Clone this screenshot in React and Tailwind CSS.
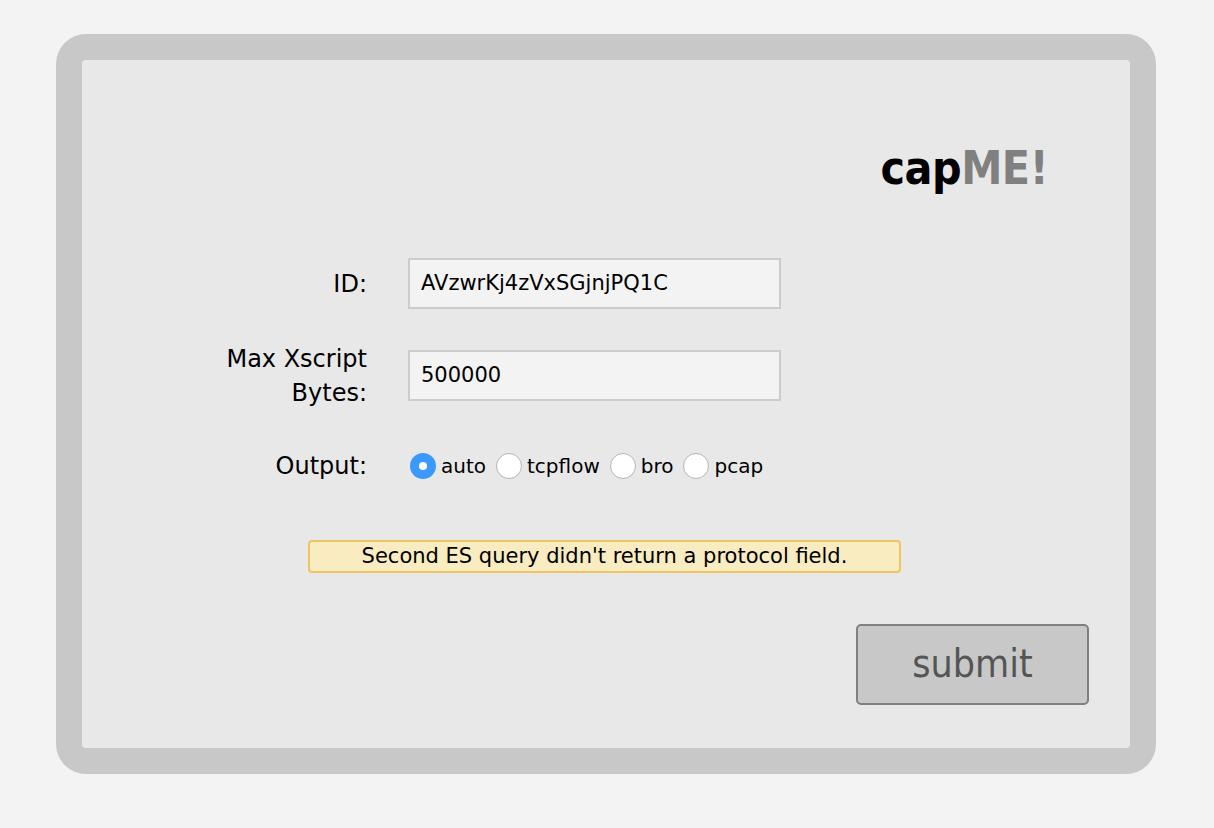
import React from "react";

const dejavu = { fontFamily: '"DejaVu Sans", Verdana, sans-serif' };
const cond = { fontFamily: '"DejaVu Sans Condensed", "DejaVu Sans", sans-serif' };

function Radio({ checked, label }) {
  return (
    <label className="flex items-center">
      {checked ? (
        <span className="flex h-[26px] w-[26px] items-center justify-center rounded-full bg-[#3b99fc]">
          <span className="h-[8px] w-[8px] rounded-full bg-white" />
        </span>
      ) : (
        <span className="h-[26px] w-[26px] rounded-full border border-[#b5b5b5] bg-white" />
      )}
      <span className="ml-[5px] mr-[10px] text-[20px] text-black" style={dejavu}>
        {label}
      </span>
    </label>
  );
}

function Row({ label, children, className = "" }) {
  return (
    <div className={"flex h-[51px] items-center " + className}>
      <div className="w-[285px] text-right text-[24px] leading-[34px] text-black" style={dejavu}>
        {label}
      </div>
      <div className="ml-[41px] flex items-center">{children}</div>
    </div>
  );
}

function Field({ value }) {
  return (
    <div
      className="flex h-[51px] w-[373px] items-center border-2 border-[#cccccc] bg-[#f3f3f3] px-[11px] text-[21px] text-black"
      style={dejavu}
    >
      {value}
    </div>
  );
}

export default function App() {
  return (
    <div className="min-h-[828px] w-full bg-[#f3f3f3] pt-[34px] pl-[56px]">
      <div className="w-[1100px] h-[740px] rounded-[30px] bg-[#c8c8c8] p-[26px]">
        <div className="h-full w-full rounded-[4px] bg-[#e8e8e8] pt-[85px]">
          <div className="flex h-[46px] justify-end pr-[82px]">
            <div className="text-[46px] font-bold leading-none tracking-[-0.5px]" style={cond}>
              <span className="text-black">cap</span>
              <span className="text-[#808080]">ME!</span>
            </div>
          </div>

          <Row label="ID:" className="mt-[67px]">
            <Field value="AVzwrKj4zVxSGjnjPQ1C" />
          </Row>

          <Row
            label={
              <>
                Max Xscript
                <br />
                Bytes:
              </>
            }
            className="mt-[41px]"
          >
            <Field value="500000" />
          </Row>

          <Row label="Output:" className="mt-[39px]">
            <div className="ml-[2px] flex items-center">
              <Radio checked label="auto" />
              <Radio label="tcpflow" />
              <Radio label="bro" />
              <Radio label="pcap" />
            </div>
          </Row>

          <div className="mt-[49px] pl-[226px]">
            <div
              className="flex h-[33px] w-[593px] items-center justify-center rounded-[4px] border-2 border-[#f0c463] bg-[#f9ecc0] text-[21px] text-black"
              style={dejavu}
            >
              Second ES query didn't return a protocol field.
            </div>
          </div>

          <div className="mt-[51px] flex justify-end pr-[41px]">
            <button
              className="h-[81px] w-[233px] rounded-[5px] border-2 border-[#808080] bg-[#c8c8c8] text-[39px] text-[#555555]"
              style={cond}
            >
              submit
            </button>
          </div>
        </div>
      </div>
    </div>
  );
}
